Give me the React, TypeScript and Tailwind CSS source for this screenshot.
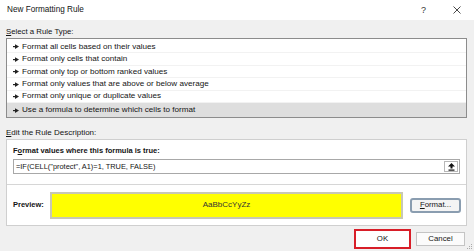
import React from "react";

const rows = [
  "Format all cells based on their values",
  "Format only cells that contain",
  "Format only top or bottom ranked values",
  "Format only values that are above or below average",
  "Format only unique or duplicate values",
  "Use a formula to determine which cells to format",
];

function Arrow() {
  return (
    <svg width="6" height="5" viewBox="0 0 6 5" className="shrink-0">
      <rect x="0" y="2" width="3" height="1.2" fill="#222" />
      <polygon points="2,0.3 6,2.6 2,4.9" fill="#222" />
    </svg>
  );
}

export default function App() {
  return (
    <div
      className="w-[474px] h-[251px] bg-[#f0f0f0] flex flex-col overflow-hidden text-[#141414] relative"
      style={{ fontFamily: '"Liberation Sans", Arial, sans-serif' }}
    >
      {/* Title bar */}
      <div className="h-[20px] bg-white flex items-center pl-[7px] pr-[13px] shrink-0">
        <span className="text-[8.2px] flex-1 leading-none">New Formatting Rule</span>
        <span className="text-[9px] text-[#333] mr-[27px] leading-none">?</span>
        <svg width="8" height="8" viewBox="0 0 8 8">
          <path d="M0.5 0.5 L7.5 7.5 M7.5 0.5 L0.5 7.5" stroke="#333" strokeWidth="0.9" />
        </svg>
      </div>

      <div className="flex flex-col pl-[6px] pr-[7px]">
        <div className="h-[18px] flex items-end pb-[2px] text-[7.8px] leading-none">
          <span>
            <span className="underline">S</span>elect a Rule Type:
          </span>
        </div>
        <div className="h-[80px] bg-white border border-[#8c8c8c] pt-[2px] flex flex-col">
          {rows.map((r, i) => (
            <div
              key={r}
              className={`flex items-center gap-[3px] pl-[6px] text-[8.1px] leading-none ${
                i === rows.length - 1 ? "bg-[#dedede] h-[14px]" : "h-[12.6px] border-b border-[#f2f2f2]"
              }`}
            >
              <Arrow />
              <span>{r}</span>
            </div>
          ))}
        </div>

        <div className="h-[21px] flex items-end pb-[2px] text-[8px] leading-none">
          <span>
            <span className="underline">E</span>dit the Rule Description:
          </span>
        </div>
        <div className="h-[87px] bg-white border border-[#cfcfcf] flex flex-col">
          <div className="flex flex-col px-[6px] pt-[5px] pb-[10px] border-b border-[#d6d6d6]">
            <div className="text-[7.5px] font-bold leading-none h-[12px] flex items-center">
              <span>
                F<span className="underline">o</span>rmat values where this formula is true:
              </span>
            </div>
            <div className="mt-[2px] h-[15px] border border-[#a8a8a8] flex items-center pl-[2px] pr-[1px]">
              <span className="flex-1 text-[7.4px] leading-none">=IF(CELL("protect", A1)=1, TRUE, FALSE)</span>
              <div className="w-[14px] h-[11px] border border-[#b8b8b8] bg-white flex items-center justify-center">
                <svg width="7" height="8" viewBox="0 0 7 8">
                  <polygon points="3.5,0 7,3.5 4.5,3.5 4.5,5.5 2.5,5.5 2.5,3.5 0,3.5" fill="#111" />
                  <rect x="0.5" y="6.5" width="6" height="1.2" fill="#111" />
                </svg>
              </div>
            </div>
          </div>
          <div className="flex-1 flex items-center pl-[6px] pr-[4px]">
            <div className="w-[37px] text-[7.5px] font-bold leading-none">Preview:</div>
            <div className="w-[353px] h-[27px] bg-[#ffff00] border-2 border-[#c8c8b4] flex items-center justify-center text-[8px] leading-none text-[#333]">
              AaBbCcYyZz
            </div>
            <div className="ml-[7px] w-[51px] h-[15px] rounded-[3px] border-2 border-[#8a9db0] bg-[#f4f4f4] flex items-center justify-center text-[7.8px] leading-none">
              <span>
                <span className="underline">F</span>ormat...
              </span>
            </div>
          </div>
        </div>

        <div className="flex justify-end items-center mt-[3px] pr-[2px] gap-[5px]">
          <div className="w-[57px] h-[20px] border-2 border-[#d81e28] bg-white flex items-center justify-center text-[7.8px] leading-none">
            OK
          </div>
          <div className="w-[49px] h-[14px] border border-[#c4c4c4] bg-[#fbfbfb] flex items-center justify-center text-[7.8px] leading-none">
            Cancel
          </div>
        </div>
      </div>

      <svg className="absolute right-[1px] bottom-[1px]" width="6" height="6" viewBox="0 0 6 6">
        <rect x="4" y="0" width="1" height="1" fill="#aaa" />
        <rect x="2" y="2" width="1" height="1" fill="#aaa" />
        <rect x="4" y="2" width="1" height="1" fill="#aaa" />
        <rect x="0" y="4" width="1" height="1" fill="#aaa" />
        <rect x="2" y="4" width="1" height="1" fill="#aaa" />
        <rect x="4" y="4" width="1" height="1" fill="#aaa" />
      </svg>
    </div>
  );
}
